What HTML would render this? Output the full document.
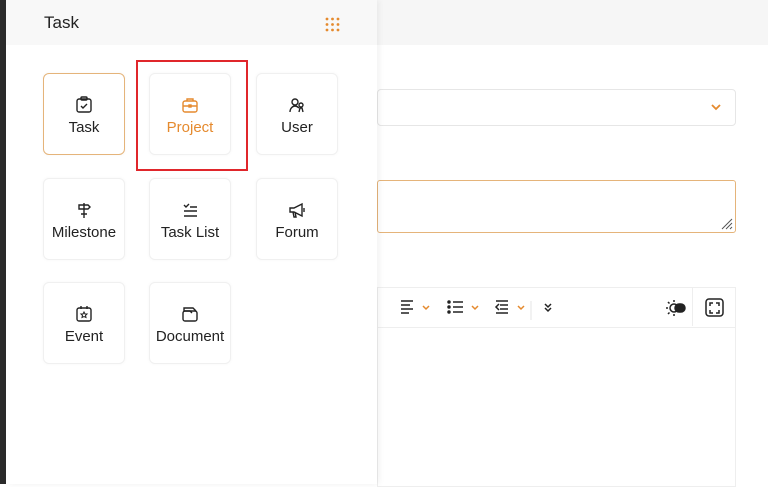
<!DOCTYPE html>
<html><head><style>
body{margin:0;width:768px;height:484px;overflow:hidden;font-family:"Liberation Sans",sans-serif;background:#fff;position:relative}
.abs{position:absolute}
.card{position:absolute;width:82px;height:82px;border:1px solid #f0f0f0;border-radius:6px;box-sizing:border-box;text-align:center;font-size:15px;color:#222;background:#fff;box-shadow:0 0 3px rgba(0,0,0,.04)}
.card svg{display:block;margin:22px auto 5px}
</style></head><body>
<div class="abs" style="left:0;top:0;width:768px;height:45px;background:#f6f6f6"></div>
<div class="abs" style="left:377px;top:89px;width:359px;height:37px;border:1px solid #e6e6e6;border-radius:4px;box-sizing:border-box"></div>
<svg class="abs" style="left:710px;top:102px" width="12" height="10"><path d="M2 3l4 4 4-4" stroke="#e58a2e" stroke-width="1.8" fill="none"/></svg>
<div class="abs" style="left:377px;top:180px;width:359px;height:53px;border:1px solid #e5b47a;border-radius:3px;box-sizing:border-box"></div>
<svg class="abs" style="left:720px;top:217px" width="14" height="14" stroke="#555" stroke-width="1"><path d="M2 12L12 2M6 12l6-6M10 12l2-2"/></svg>
<div class="abs" style="left:377px;top:287px;width:359px;height:200px;border:1px solid #eee;box-sizing:border-box"></div>
<div class="abs" style="left:377px;top:327px;width:359px;height:1px;background:#eee"></div>
<div class="abs" style="left:692px;top:288px;width:1px;height:38px;background:#eee"></div>
<svg class="abs" style="left:380px;top:296px" width="360" height="24" fill="none" stroke="#222" stroke-width="1.5">
<path d="M21 5h12M21 9h9M21 13h12M21 17h8"/>
<path d="M43 10l3 3 3-3M92 10l3 3 3-3M138 10l3 3 3-3" stroke="#e58a2e"/>
<path d="M73 6h10M73 11h10M73 16h10"/><circle cx="69" cy="6" r="1" fill="#222"/><circle cx="69" cy="11" r="1" fill="#222"/><circle cx="69" cy="16" r="1" fill="#222"/>
<path d="M116 5h12M120 9h8M120 13h8M116 17h12M119 8l-3 3 3 3"/>
<path d="M151 5v19" stroke="#eee"/>
<path d="M165 8l3 3 3-3M165 12l3 3 3-3"/>
<circle cx="294" cy="12" r="4"/><rect x="295" y="8" width="10" height="8" rx="4" fill="#222"/>
<path d="M294 4v2M294 18v2M286 12h2M288 6l1.5 1.5M288 18l1.5-1.5"/>
<rect x="326" y="3" width="17" height="17" rx="3"/><path d="M330 10v-3h3M339 10v-3h-3M330 14v3h3M339 14v3h-3"/>
</svg>
<div class="abs" style="left:0;top:0;width:6px;height:484px;background:#2b2b2b"></div>
<div class="abs" style="left:6px;top:0;width:371px;height:484px;background:#fff;box-shadow:2px 0 6px rgba(0,0,0,.06)"></div>
<div class="abs" style="left:6px;top:0;width:371px;height:45px;background:#f8f8f8"></div>
<div class="abs" style="left:44px;top:13px;font-size:17px;color:#222">Task</div>
<svg class="abs" style="left:325px;top:17px" width="15" height="15" fill="#e58a2e"><circle cx="2" cy="2" r="1.4"/><circle cx="7.5" cy="2" r="1.4"/><circle cx="13" cy="2" r="1.4"/><circle cx="2" cy="7.5" r="1.4"/><circle cx="7.5" cy="7.5" r="1.4"/><circle cx="13" cy="7.5" r="1.4"/><circle cx="2" cy="13" r="1.4"/><circle cx="7.5" cy="13" r="1.4"/><circle cx="13" cy="13" r="1.4"/></svg>
<div class="card" style="left:43px;top:73px;border-color:#e5b47a"><svg width="18" height="18" fill="none" stroke="#222" stroke-width="1.4"><rect x="2" y="3" width="14" height="13" rx="2"/><rect x="6" y="1" width="6" height="3" rx="1"/><path d="M6 10l2 2 4-4"/></svg>Task</div>
<div class="card" style="left:149px;top:73px;color:#e58a2e"><svg width="18" height="18" fill="none" stroke="#e58a2e" stroke-width="1.4"><rect x="2" y="5" width="14" height="11" rx="2"/><path d="M6 5V3h6v2M2 10h14"/><rect x="8" y="9" width="2" height="2"/></svg>Project</div>
<div class="card" style="left:256px;top:73px"><svg width="18" height="18" fill="none" stroke="#222" stroke-width="1.4"><circle cx="7" cy="6" r="3"/><path d="M2 16c0-4 3-6 5-6s3 1 4 2"/><circle cx="13" cy="9" r="2"/><path d="M11 16l1-4h2l1 4"/></svg>User</div>
<div class="card" style="left:43px;top:178px"><svg width="18" height="18" fill="none" stroke="#222" stroke-width="1.4"><path d="M9 2v15M4 4h9l2 2-2 2H4zM6 13h6"/></svg>Milestone</div>
<div class="card" style="left:149px;top:178px"><svg width="18" height="18" fill="none" stroke="#222" stroke-width="1.4"><path d="M3 4l2 2 3-3M9 6h7M3 10h13M3 15h13"/></svg>Task List</div>
<div class="card" style="left:256px;top:178px"><svg width="18" height="18" fill="none" stroke="#222" stroke-width="1.4"><path d="M2 7h4l8-4v12l-8-4H2zM5 11l1 5h2l-1-5"/><path d="M16 7v4"/></svg>Forum</div>
<div class="card" style="left:43px;top:282px"><svg width="18" height="18" fill="none" stroke="#222" stroke-width="1.4"><rect x="2" y="3" width="14" height="13" rx="2"/><path d="M6 1v3M12 1v3"/><path d="M9 7l1 2h2l-1.5 1.5.5 2-2-1-2 1 .5-2L6 9h2z" stroke-width="1"/></svg>Event</div>
<div class="card" style="left:149px;top:282px"><svg width="18" height="18" fill="none" stroke="#222" stroke-width="1.4"><rect x="2" y="6" width="14" height="10" rx="2"/><path d="M3 6V3h9l3 3M3 6h6l2 2"/></svg>Document</div>
<div class="abs" style="left:136px;top:60px;width:112px;height:111px;border:2px solid #e0262b;box-sizing:border-box"></div>
</body></html>
